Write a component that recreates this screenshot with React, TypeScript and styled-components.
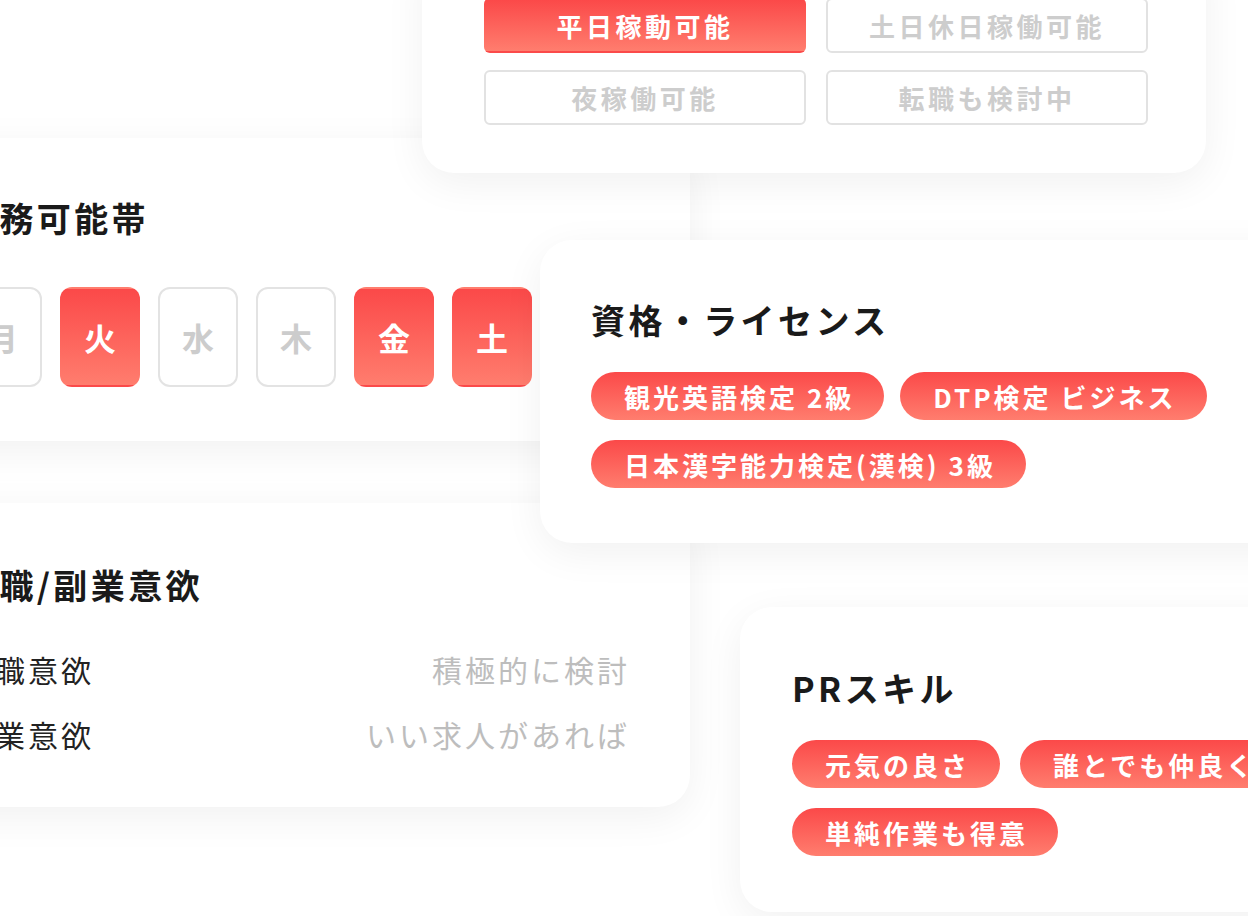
import styled, { createGlobalStyle } from 'styled-components';

const GlobalStyle = createGlobalStyle`
  html, body {
    margin: 0;
    padding: 0;
    background: #ffffff;
    overflow: hidden;
  }
  body {
    font-family: 'Noto Sans CJK JP', 'Noto Sans', sans-serif;
    color: #1a1a1a;
  }
`;

const RED = 'linear-gradient(180deg, #fb4949 0%, #ff7d6e 100%)';

const Canvas = styled.div`
  position: relative;
  width: 1248px;
  height: 916px;
  overflow: hidden;
  background: #ffffff;
`;

// cards are floating panels on the canvas, placed by coordinates
const Card = styled.section<{ $x: number; $y: number; $w: number; $pad: string; $z: number }>`
  position: absolute;
  left: ${(p) => p.$x}px;
  top: ${(p) => p.$y}px;
  width: ${(p) => p.$w}px;
  box-sizing: border-box;
  padding: ${(p) => p.$pad};
  background: #ffffff;
  border-radius: 32px;
  box-shadow: 0 10px 40px rgba(0, 0, 0, 0.06);
  z-index: ${(p) => p.$z};
  display: flex;
  flex-direction: column;
`;

const Title = styled.h2<{ $mb: number }>`
  margin: 0 0 ${(p) => p.$mb}px;
  font-size: 34px;
  line-height: 50px;
  font-weight: 700;
  letter-spacing: 3.4px;
  color: #1a1a1a;
  white-space: nowrap;
`;

const ChoiceGrid = styled.div`
  display: grid;
  grid-template-columns: 322px 322px;
  grid-auto-rows: 55px;
  gap: 17px 20px;
`;

const Choice = styled.div<{ $on?: boolean }>`
  display: flex;
  align-items: center;
  justify-content: center;
  box-sizing: border-box;
  border-radius: 6px;
  font-size: 26px;
  font-weight: 700;
  letter-spacing: 3.5px;
  background: ${(p) => (p.$on ? RED : '#ffffff')};
  border: 2px solid ${(p) => (p.$on ? 'transparent' : '#e2e2e2')};
  color: ${(p) => (p.$on ? '#ffffff' : '#cdcdcd')};
`;

const DayRow = styled.div`
  display: flex;
  gap: 18px;
`;

const Day = styled.div<{ $on?: boolean }>`
  width: 80px;
  height: 100px;
  box-sizing: border-box;
  border-radius: 12px;
  display: flex;
  align-items: center;
  justify-content: center;
  font-size: 32px;
  font-weight: 700;
  background: ${(p) => (p.$on ? RED : '#ffffff')};
  border: 2px solid ${(p) => (p.$on ? 'transparent' : '#e3e3e3')};
  color: ${(p) => (p.$on ? '#ffffff' : '#cccccc')};
`;

const TagList = styled.div<{ $gap: number; $max: number }>`
  display: flex;
  flex-wrap: wrap;
  gap: 20px ${(p) => p.$gap}px;
  max-width: ${(p) => p.$max}px;
`;

const Tag = styled.span`
  display: inline-flex;
  align-items: center;
  height: 48px;
  padding: 0 30px 0 33px;
  border-radius: 24px;
  background: ${RED};
  color: #ffffff;
  font-size: 26px;
  font-weight: 700;
  letter-spacing: 3px;
  white-space: nowrap;
`;

const InfoList = styled.div`
  display: flex;
  flex-direction: column;
  gap: 20px;
`;

const InfoRow = styled.div`
  display: flex;
  justify-content: space-between;
  align-items: center;
  font-size: 30px;
  line-height: 45px;
  letter-spacing: 3px;
  font-weight: 400;
`;

const Label = styled.span`
  color: #222222;
`;

const Value = styled.span`
  color: #bdbdbd;
`;

const days = [
  { d: '月', on: false },
  { d: '火', on: true },
  { d: '水', on: false },
  { d: '木', on: false },
  { d: '金', on: true },
  { d: '土', on: true },
];

export default function App() {
  return (
    <>
      <GlobalStyle />
      <Canvas>
        <Card $x={-98} $y={138} $w={788} $pad="55px 60px 54px" $z={1}>
          <Title $mb={44}>勤務可能帯</Title>
          <DayRow>
            {days.map((x) => (
              <Day key={x.d} $on={x.on}>
                {x.d}
              </Day>
            ))}
          </DayRow>
        </Card>

        <Card $x={422} $y={-60} $w={784} $pad="58px 58px 48px 62px" $z={2}>
          <ChoiceGrid>
            <Choice $on>平日稼動可能</Choice>
            <Choice>土日休日稼働可能</Choice>
            <Choice>夜稼働可能</Choice>
            <Choice>転職も検討中</Choice>
          </ChoiceGrid>
        </Card>

        <Card $x={540} $y={240} $w={820} $pad="55px 40px 55px 51px" $z={3}>
          <Title $mb={27}>資格・ライセンス</Title>
          <TagList $gap={16} $max={700}>
            <Tag>観光英語検定 2級</Tag>
            <Tag>DTP検定 ビジネス</Tag>
            <Tag>日本漢字能力検定(漢検) 3級</Tag>
          </TagList>
        </Card>

        <Card $x={-98} $y={503} $w={788} $pad="57px 60px 50px" $z={1}>
          <Title $mb={37}>転職/副業意欲</Title>
          <InfoList>
            <InfoRow>
              <Label>転職意欲</Label>
              <Value>積極的に検討</Value>
            </InfoRow>
            <InfoRow>
              <Label>副業意欲</Label>
              <Value>いい求人があれば</Value>
            </InfoRow>
          </InfoList>
        </Card>

        <Card $x={740} $y={607} $w={760} $pad="56px 40px 56px 52px" $z={1}>
          <Title $mb={27}>PRスキル</Title>
          <TagList $gap={20} $max={620}>
            <Tag>元気の良さ</Tag>
            <Tag>誰とでも仲良くなれる</Tag>
            <Tag>単純作業も得意</Tag>
          </TagList>
        </Card>
      </Canvas>
    </>
  );
}
